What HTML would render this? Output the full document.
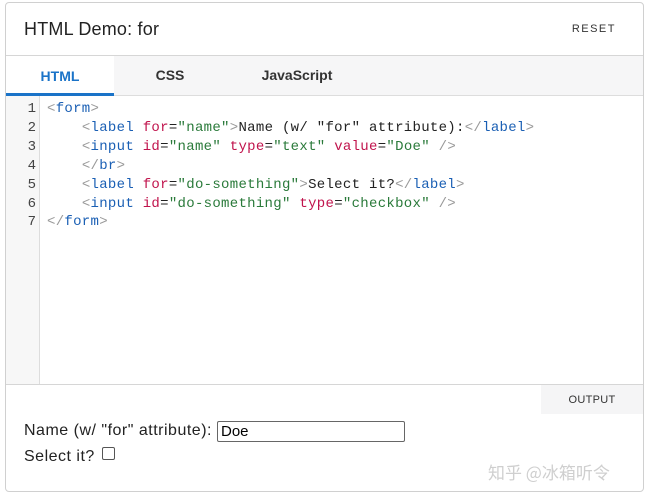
<!DOCTYPE html>
<html><head><style>
body{margin:0;background:#fff;font-family:"Liberation Sans",sans-serif;}
.box{position:absolute;left:5px;top:2px;width:637px;height:488px;border:1px solid #d0d0d0;border-radius:4px;overflow:hidden;}
.hdr{position:absolute;left:0;top:0;width:637px;height:52px;border-bottom:1px solid #d6d6d6;}
.hdr h1{position:absolute;left:18px;top:16px;margin:0;font-weight:normal;font-size:18px;color:#222;letter-spacing:.2px}
.reset{position:absolute;right:27px;top:20px;font-size:11px;letter-spacing:1.5px;color:#333;}
.tabs{position:absolute;left:0;top:53px;width:637px;height:39px;background:#f6f6f7;border-bottom:1px solid #ddd;}
.tab{position:absolute;top:0;height:39px;line-height:39px;font-size:14px;font-weight:bold;color:#333;text-align:center;}
.t1{left:0;width:108px;background:#fff;color:#1a73c8;border-bottom:3px solid #1a73c8;height:37px;line-height:40px}
.ed{position:absolute;left:0;top:93px;width:637px;height:288px;border-bottom:1px solid #d6d6d6;}
.gut{position:absolute;left:0;top:0;width:33px;height:288px;background:#f7f7f7;border-right:1px solid #ddd;}
pre{margin:0;position:absolute;top:4px;font-family:"Liberation Mono",monospace;font-size:14px;line-height:18.9px;}
.ln{left:0;width:30px;text-align:right;color:#444;}
.code{left:41px;color:#222;letter-spacing:.3px}
.g{color:#999}.tg{color:#1a5fb4}.at{color:#c0134c}.s{color:#2a7a3a}
.out{position:absolute;right:0;top:382px;width:102px;height:29px;background:#f5f5f6;font-size:11px;text-align:center;line-height:30px;color:#333;letter-spacing:.3px}
.o1{position:absolute;left:18px;top:419px;font-size:16px;color:#222;letter-spacing:.5px}
.inp{position:absolute;left:211px;top:418px;width:183px;height:19px;border:1px solid #666;border-radius:2px;font-size:15px;line-height:19px;padding-left:3px;}
.o2{position:absolute;left:18px;top:445px;font-size:16px;color:#222;letter-spacing:.5px}
.cb{position:absolute;left:96px;top:444px;width:11px;height:11px;border:1px solid #555;border-radius:2px;}
.wm{position:absolute;left:482px;top:456px;font-family:"Noto Sans CJK SC",sans-serif;font-size:17px;color:#cfcfcf;}
</style></head><body>
<div class="box">
<div class="hdr"><h1>HTML Demo: for</h1><div class="reset">RESET</div></div>
<div class="tabs"><div class="tab t1">HTML</div><div class="tab" style="left:108px;width:112px">CSS</div><div class="tab" style="left:215px;width:152px">JavaScript</div></div>
<div class="ed"><div class="gut"></div>
<pre class="ln">1
2
3
4
5
6
7</pre>
<pre class="code"><span class="g">&lt;</span><span class="tg">form</span><span class="g">&gt;</span>
    <span class="g">&lt;</span><span class="tg">label</span> <span class="at">for</span>=<span class="s">"name"</span><span class="g">&gt;</span>Name (w/ "for" attribute):<span class="g">&lt;/</span><span class="tg">label</span><span class="g">&gt;</span>
    <span class="g">&lt;</span><span class="tg">input</span> <span class="at">id</span>=<span class="s">"name"</span> <span class="at">type</span>=<span class="s">"text"</span> <span class="at">value</span>=<span class="s">"Doe"</span> <span class="g">/&gt;</span>
    <span class="g">&lt;/</span><span class="tg">br</span><span class="g">&gt;</span>
    <span class="g">&lt;</span><span class="tg">label</span> <span class="at">for</span>=<span class="s">"do-something"</span><span class="g">&gt;</span>Select it?<span class="g">&lt;/</span><span class="tg">label</span><span class="g">&gt;</span>
    <span class="g">&lt;</span><span class="tg">input</span> <span class="at">id</span>=<span class="s">"do-something"</span> <span class="at">type</span>=<span class="s">"checkbox"</span> <span class="g">/&gt;</span>
<span class="g">&lt;/</span><span class="tg">form</span><span class="g">&gt;</span></pre>
</div>
<div class="out">OUTPUT</div>
<div class="o1">Name (w/ "for" attribute):</div><div class="inp">Doe</div>
<div class="o2">Select it?</div><div class="cb"></div>
<div class="wm">知乎 @冰箱听令</div>
</div>
</body></html>
